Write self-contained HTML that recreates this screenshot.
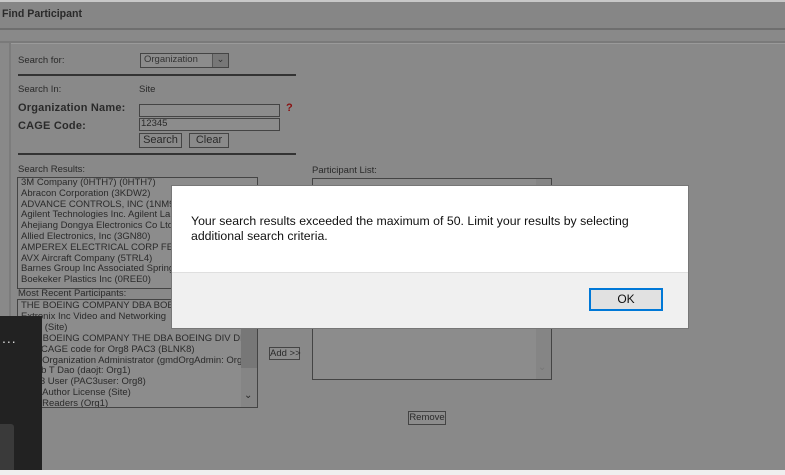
<!DOCTYPE html>
<html><head><style>
*{box-sizing:border-box}
body{margin:0;width:785px;height:475px;background:#898989;font-family:"Liberation Sans",Arial,sans-serif;font-size:9.5px;color:#2a2a2a;position:relative;overflow:hidden}
.a{position:absolute;white-space:nowrap}
.box{position:absolute;border:1px solid #444;background:#8c8c8c;white-space:nowrap}
.b{font-weight:bold;font-size:11px;letter-spacing:.2px}
</style></head><body>
<div class="a" style="left:0;top:0;width:785px;height:2px;background:#c8c8c8"></div>
<div class="a" style="left:0;top:2px;width:785px;height:26px;background:#868686"></div>
<div class="a" style="left:2px;top:8px;font-size:10.6px;font-weight:bold;color:#2a2a2a">Find Participant</div>
<div class="a" style="left:0;top:28px;width:785px;height:2px;background:#6e6e6e"></div>
<div class="a" style="left:0;top:41px;width:785px;height:2px;background:#7a7a7a"></div>
<div class="a" style="left:9px;top:43px;width:2px;height:430px;background:#7c7c7c"></div>
<div class="a" style="left:11px;top:43px;width:774px;height:1px;background:#9a9a9a"></div>
<div class="a" style="left:18px;top:55px">Search for:</div>
<div class="box" style="left:140px;top:53px;width:89px;height:15px;color:#333;padding-left:3px;line-height:12px">Organization<span style="position:absolute;right:0;top:0;width:16px;height:13px;background:#777;border-left:1px solid #555;text-align:center">⌄</span></div>
<div class="a" style="left:18px;top:74px;width:278px;height:2px;background:#333"></div>
<div class="a" style="left:18px;top:84px">Search In:</div>
<div class="a" style="left:139px;top:84px">Site</div>
<div class="a b" style="left:18px;top:102px">Organization Name:</div>
<div class="a b" style="left:18px;top:120px">CAGE Code:</div>
<div class="box" style="left:139px;top:104px;width:141px;height:13px"></div>
<div class="a" style="left:286px;top:102px;color:#8a1010;font-weight:bold;font-size:11px">?</div>
<div class="box" style="left:139px;top:118px;width:141px;height:13px;line-height:10px;padding-left:1px">12345</div>
<div class="box" style="left:139px;top:133px;width:43px;height:15px;background:#8a8a8a;text-align:center;font-size:11px;line-height:13px">Search</div>
<div class="box" style="left:189px;top:133px;width:40px;height:15px;background:#8a8a8a;text-align:center;font-size:11px;line-height:13px">Clear</div>
<div class="a" style="left:18px;top:153px;width:278px;height:2px;background:#333"></div>
<div class="a" style="left:18px;top:164px">Search Results:</div>
<div class="box" style="left:17px;top:177px;width:241px;height:112px;overflow:hidden;line-height:10.8px;padding-left:3px">3M Company (0HTH7) (0HTH7)<br>Abracon Corporation (3KDW2)<br>ADVANCE CONTROLS, INC (1NM9<br>Agilent Technologies Inc. Agilent La<br>Ahejiang Dongya Electronics Co Ltd<br>Allied Electronics, Inc (3GN80)<br>AMPEREX ELECTRICAL CORP FE<br>AVX Aircraft Company (5TRL4)<br>Barnes Group Inc Associated Spring<br>Boekeker Plastics Inc (0REE0)</div>
<div class="a" style="left:18px;top:288px">Most Recent Participants:</div>
<div class="box" style="left:17px;top:299px;width:241px;height:109px;overflow:hidden;line-height:10.9px;padding-left:3px;padding-top:1px">THE BOEING COMPANY DBA BOE<br>Extronix Inc Video and Networking<br>Org1 (Site)<br>THE BOEING COMPANY THE DBA BOEING DIV DEFEN<br>Test CAGE code for Org8 PAC3 (BLNK8)<br>gmd Organization Administrator (gmdOrgAdmin: Org<br>Jacob T Dao (daojt: Org1)<br>PAC3 User (PAC3user: Org8)<br>Org1Author License (Site)<br>Org1Readers (Org1)</div>
<div class="a" style="left:241px;top:300px;width:16px;height:107px;background:#858585"></div>
<div class="a" style="left:241px;top:328px;width:16px;height:40px;background:#777"></div>
<div class="a" style="left:244px;top:390px;font-size:10px">⌄</div>
<div class="box" style="left:269px;top:347px;width:31px;height:13px;line-height:11px;text-align:center;font-size:9.5px">Add &gt;&gt;</div>
<div class="a" style="left:312px;top:165px">Participant List:</div>
<div class="box" style="left:312px;top:178px;width:240px;height:202px"></div>
<div class="a" style="left:536px;top:179px;width:15px;height:200px;background:#858585"></div>
<div class="a" style="left:538px;top:362px;font-size:10px;color:#777">⌄</div>
<div class="box" style="left:408px;top:411px;width:38px;height:14px;line-height:12px;text-align:center;font-size:9.5px">Remove</div>
<div class="a" style="left:0;top:316px;width:42px;height:156px;background:#222"></div>
<div class="a" style="left:2px;top:330px;color:#ddd;font-size:14px;letter-spacing:1px">...</div>
<div class="a" style="left:0;top:424px;width:14px;height:48px;background:#3a3a3a;border-radius:0 3px 0 0"></div>
<div class="a" style="left:0;top:470px;width:785px;height:5px;background:#efefef"></div>
<div class="a" style="left:171px;top:185px;width:518px;height:144px;background:#fff;border:1px solid #777">
<div style="position:absolute;left:19px;top:28px;font-size:12.3px;color:#111;line-height:15px;white-space:normal;width:480px">Your search results exceeded the maximum of 50. Limit your results by selecting additional search criteria.</div>
<div style="position:absolute;left:0;top:86px;width:516px;height:56px;background:#f0f0f0;border-top:1px solid #dfdfdf"></div>
<div style="position:absolute;left:417px;top:102px;width:74px;height:23px;background:#e1e1e1;border:2px solid #0078d7;text-align:center;line-height:19px;font-size:12px;color:#111">OK</div>
</div>
</body></html>
